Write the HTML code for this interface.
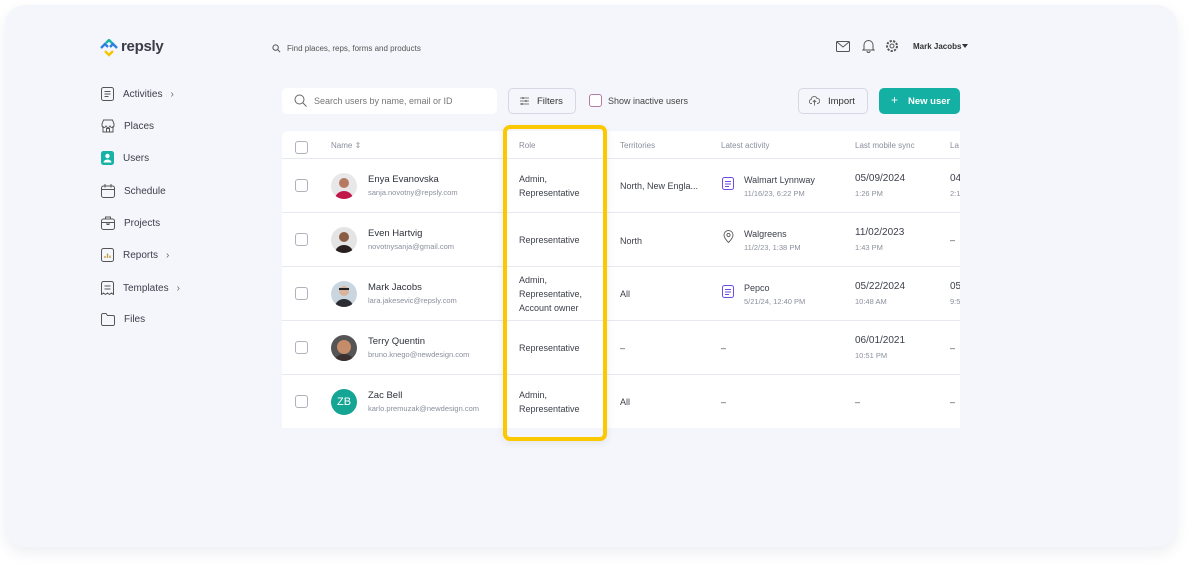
<!DOCTYPE html>
<html><head><meta charset="utf-8">
<style>
*{box-sizing:border-box;margin:0;padding:0}
body{width:1202px;height:572px;background:#fff;font-family:"Liberation Sans",sans-serif;color:#3c3f4a;position:relative;overflow:hidden}
.card{position:absolute;left:5px;top:5px;width:1172px;height:542px;background:#f4f6fb;border-radius:20px;box-shadow:0 6px 14px rgba(40,50,90,.08)}
.abs{position:absolute}
.nav{position:absolute;left:101px;font-size:10px;color:#3c3f4a;display:flex;align-items:center}
.nav svg{margin-right:9px}
.chev{margin-left:8px;color:#666;font-size:10px}
.table{position:absolute;left:282px;top:131px;width:678px;height:297px;background:#fff;border-radius:6px 0 0 0;overflow:hidden}
.th{position:absolute;top:10px;font-size:8px;color:#8a8f9c}
.row{position:absolute;left:0;width:678px;height:54px;border-top:1px solid #e6e9f2}
.cb{position:absolute;width:13px;height:13px;border:1px solid #aeb2bb;border-radius:3px;background:#fff}
.nm{position:absolute;left:86px;font-size:9.5px;color:#2f323b}
.em{position:absolute;left:86px;font-size:7.5px;color:#8a8f9c}
.t{position:absolute;font-size:9px;color:#3c3f4a;line-height:14px}
.s{position:absolute;font-size:7.5px;color:#8a8f9c}
.av{position:absolute;left:49px;width:26px;height:26px;border-radius:50%;overflow:hidden}
</style></head><body>
<div class="card"></div>

<svg class="abs" style="left:99px;top:39px" width="20" height="20" viewBox="0 0 20 20">
<path d="M2 9 L6 5 L9 8" stroke="#2d7fe0" stroke-width="2.4" fill="none"/>
<path d="M7 4 L10 1 L14 5" stroke="#17b3a6" stroke-width="2.4" fill="none"/>
<path d="M11 8 L14 5 L18 9" stroke="#2d7fe0" stroke-width="2.4" fill="none"/>
<path d="M6 12 L10 16 L14 12" stroke="#f5c400" stroke-width="2.4" fill="none"/>
</svg>
<div class="abs" style="left:121px;top:38px;font-size:15px;font-weight:bold;color:#3a3d46;letter-spacing:-.3px">repsly</div>

<svg class="abs" style="left:272px;top:44px" width="9" height="9" viewBox="0 0 10 10"><circle cx="4" cy="4" r="3" stroke="#555" fill="none" stroke-width="1.1"/><path d="M6.3 6.3L9 9" stroke="#555" stroke-width="1.1"/></svg>
<div class="abs" style="left:287px;top:44px;font-size:8px;color:#555">Find places, reps, forms and products</div>

<svg class="abs" style="left:836px;top:41px" width="14" height="11" viewBox="0 0 14 11"><rect x=".5" y=".5" width="13" height="10" rx="1" fill="none" stroke="#555"/><path d="M1 1l6 5 6-5" fill="none" stroke="#555"/></svg>
<svg class="abs" style="left:862px;top:39px" width="13" height="14" viewBox="0 0 13 14"><path d="M2 10V6a4.5 4.5 0 019 0v4l1 1H1z M5 12a1.5 1.5 0 003 0" fill="none" stroke="#555"/></svg>
<svg class="abs" style="left:885px;top:39px" width="14" height="14" viewBox="0 0 14 14"><circle cx="7" cy="7" r="2" fill="none" stroke="#555"/><circle cx="7" cy="7" r="5" fill="none" stroke="#555" stroke-dasharray="2.2 1.3" stroke-width="2"/></svg>
<div class="abs" style="left:913px;top:42px;font-size:8px;font-weight:bold;color:#333">Mark Jacobs</div>
<div class="abs" style="left:962px;top:44px;width:0;height:0;border-left:3.5px solid transparent;border-right:3.5px solid transparent;border-top:4px solid #333"></div>

<div class="nav" style="top:87px"><svg width="13" height="14" viewBox="0 0 13 14"><rect x=".5" y=".5" width="12" height="13" rx="2" fill="none" stroke="#555"/><path d="M3.5 4.5h6M3.5 7h6M3.5 9.5h4" stroke="#555"/></svg>Activities<span class="chev">&#8250;</span></div>
<div class="nav" style="top:119px"><svg width="14" height="14" viewBox="0 0 14 14"><path d="M1 5l1.5-4h9L13 5v1.5a2 2 0 01-4 0 2 2 0 01-4 0 2 2 0 01-4 0z M2 7v6h10V7 M5.5 13V9.5h3V13" fill="none" stroke="#555"/></svg>Places</div>
<div class="nav" style="top:151px"><svg width="13" height="14" viewBox="0 0 13 14"><rect x="0" y="0" width="13" height="14" rx="2.5" fill="#17b3a6"/><circle cx="6.5" cy="5" r="2.2" fill="#fff"/><path d="M2.5 11.5a4 3 0 018 0z" fill="#fff"/></svg>Users</div>
<div class="nav" style="top:184px"><svg width="14" height="14" viewBox="0 0 14 14"><rect x=".5" y="2" width="13" height="11.5" rx="2" fill="none" stroke="#555"/><path d="M.5 5.5h13M4 0v3.5M10 0v3.5" stroke="#555"/></svg>Schedule</div>
<div class="nav" style="top:216px"><svg width="14" height="14" viewBox="0 0 14 14"><rect x=".5" y="3" width="13" height="10.5" rx="2" fill="none" stroke="#555"/><path d="M4.5 3V1h5v2M.5 6.5h13M6 6.5v2h2v-2" fill="none" stroke="#555"/></svg>Projects</div>
<div class="nav" style="top:248px"><svg width="13" height="14" viewBox="0 0 13 14"><rect x=".5" y=".5" width="12" height="13" rx="2" fill="none" stroke="#555"/><path d="M4 10V8M6.5 10V5.5M9 10V7.5" stroke="#c8983c" stroke-width="1.3"/></svg>Reports<span class="chev">&#8250;</span></div>
<div class="nav" style="top:281px"><svg width="13" height="14" viewBox="0 0 13 14"><path d="M.5 2.5a2 2 0 012-2h8a2 2 0 012 2v11l-2-1.5-2 1.5-2-1.5-2 1.5-2-1.5-2 1.5z M3.5 5h6M3.5 8h6" fill="none" stroke="#555"/></svg>Templates<span class="chev">&#8250;</span></div>
<div class="nav" style="top:313px"><svg width="14" height="13" viewBox="0 0 14 13"><path d="M.5 2a1.5 1.5 0 011.5-1.5h3l1.5 2h5.5a1.5 1.5 0 011.5 1.5v7a1.5 1.5 0 01-1.5 1.5H2A1.5 1.5 0 01.5 11z" fill="none" stroke="#555"/></svg>Files</div>

<div class="abs" style="left:282px;top:88px;width:215px;height:26px;background:#fff;border-radius:5px"></div>
<svg class="abs" style="left:294px;top:94px" width="13" height="13" viewBox="0 0 13 13"><circle cx="5.5" cy="5.5" r="4.5" fill="none" stroke="#666"/><path d="M9 9l3.5 3.5" stroke="#666"/></svg>
<div class="abs" style="left:314px;top:96px;font-size:9px;color:#777">Search users by name, email or ID</div>
<div class="abs" style="left:508px;top:88px;width:68px;height:26px;border:1px solid #d5d8e2;border-radius:5px;background:#f4f6fb"></div>
<svg class="abs" style="left:520px;top:97px" width="9" height="8" viewBox="0 0 9 8"><path d="M0 1h9M0 4h9M0 7h9" stroke="#555" stroke-width=".8"/><path d="M3 0v2M6 3v2M2 6v2" stroke="#555"/></svg>
<div class="abs" style="left:537px;top:96px;font-size:9.5px;color:#333">Filters</div>
<div class="abs" style="left:589px;top:94px;width:13px;height:13px;border:1px solid #b37aa5;border-radius:3px;background:#fff"></div>
<div class="abs" style="left:608px;top:96px;font-size:9px;color:#444">Show inactive users</div>
<div class="abs" style="left:798px;top:88px;width:70px;height:26px;border:1px solid #d5d8e2;border-radius:5px;background:#f4f6fb"></div>
<svg class="abs" style="left:809px;top:96px" width="11" height="10" viewBox="0 0 11 10"><path d="M3 7.5H2.5a2 2 0 01-.3-4A3 3 0 018 2.5a2.3 2.3 0 01.5 5H8M5.5 9.5V4.5M3.8 6l1.7-1.7L7.2 6" fill="none" stroke="#666" stroke-width=".9"/></svg>
<div class="abs" style="left:828px;top:96px;font-size:9.5px;color:#333">Import</div>
<div class="abs" style="left:879px;top:88px;width:81px;height:26px;background:#14b0a3;border-radius:5px"></div>
<div class="abs" style="left:891px;top:93px;font-size:12px;color:#fff">+</div>
<div class="abs" style="left:908px;top:96px;font-size:9.5px;color:#fff;font-weight:bold">New user</div>

<div class="table">
  <div class="cb" style="left:13px;top:10px"></div>
  <div class="th" style="left:49px">Name <span style="color:#999;font-size:8px">&#8661;</span></div>
  <div class="th" style="left:237px">Role</div>
  <div class="th" style="left:338px">Territories</div>
  <div class="th" style="left:439px">Latest activity</div>
  <div class="th" style="left:573px">Last mobile sync</div>
  <div class="th" style="left:668px">La</div>

  <div class="row" style="top:27px">
    <div class="cb" style="left:13px;top:20px"></div>
    <div class="av" style="top:14px;background:#e8e8ea"><svg width="26" height="26"><circle cx="13" cy="10" r="5" fill="#b57a62"/><path d="M4 26a9 8 0 0118 0z" fill="#c0184a"/></svg></div>
    <div class="nm" style="top:15px">Enya Evanovska</div><div class="em" style="top:29px">sanja.novotny@repsly.com</div>
    <div class="t" style="left:237px;top:13px">Admin,<br>Representative</div>
    <div class="t" style="left:338px;top:20px">North, New Engla...</div>
    <svg class="abs" style="left:440px;top:17px" width="12" height="14" viewBox="0 0 12 14"><rect x=".5" y="1.5" width="11" height="12" rx="2" fill="none" stroke="#6b4de6"/><path d="M3 5.5h6M3 8h6M3 10.5h4" stroke="#6b4de6"/></svg>
    <div class="t" style="left:462px;top:14px">Walmart Lynnway</div><div class="s" style="left:462px;top:30px">11/16/23, 6:22 PM</div>
    <div class="t" style="left:573px;top:13px;font-size:10px">05/09/2024</div><div class="s" style="left:573px;top:30px">1:26 PM</div>
    <div class="t" style="left:668px;top:13px;font-size:10px">04</div><div class="s" style="left:668px;top:30px">2:1</div>
  </div>
  <div class="row" style="top:81px">
    <div class="cb" style="left:13px;top:20px"></div>
    <div class="av" style="top:14px;background:#e4e4e4"><svg width="26" height="26"><circle cx="13" cy="10" r="5" fill="#8a5d45"/><path d="M4 26a9 8 0 0118 0z" fill="#2a1f1f"/></svg></div>
    <div class="nm" style="top:15px">Even Hartvig</div><div class="em" style="top:29px">novotnysanja@gmail.com</div>
    <div class="t" style="left:237px;top:20px">Representative</div>
    <div class="t" style="left:338px;top:21px">North</div>
    <svg class="abs" style="left:441px;top:17px" width="11" height="13" viewBox="0 0 11 13"><path d="M5.5 12.5S1 8 1 5a4.5 4.5 0 019 0c0 3-4.5 7.5-4.5 7.5z" fill="none" stroke="#666"/><circle cx="5.5" cy="5" r="1.6" fill="none" stroke="#666"/></svg>
    <div class="t" style="left:462px;top:14px">Walgreens</div><div class="s" style="left:462px;top:30px">11/2/23, 1:38 PM</div>
    <div class="t" style="left:573px;top:13px;font-size:10px">11/02/2023</div><div class="s" style="left:573px;top:30px">1:43 PM</div>
    <div class="t" style="left:668px;top:20px">–</div>
  </div>
  <div class="row" style="top:135px">
    <div class="cb" style="left:13px;top:20px"></div>
    <div class="av" style="top:14px;background:#c9d6e0"><svg width="26" height="26"><circle cx="13" cy="10" r="5" fill="#d8b49a"/><path d="M8 8h10" stroke="#222" stroke-width="2"/><path d="M4 26a9 8 0 0118 0z" fill="#2c2c33"/></svg></div>
    <div class="nm" style="top:15px">Mark Jacobs</div><div class="em" style="top:29px">lara.jakesevic@repsly.com</div>
    <div class="t" style="left:237px;top:6px">Admin,<br>Representative,<br>Account owner</div>
    <div class="t" style="left:338px;top:20px">All</div>
    <svg class="abs" style="left:440px;top:17px" width="12" height="14" viewBox="0 0 12 14"><rect x=".5" y="1.5" width="11" height="12" rx="2" fill="none" stroke="#6b4de6"/><path d="M3 5.5h6M3 8h6M3 10.5h4" stroke="#6b4de6"/></svg>
    <div class="t" style="left:462px;top:14px">Pepco</div><div class="s" style="left:462px;top:30px">5/21/24, 12:40 PM</div>
    <div class="t" style="left:573px;top:13px;font-size:10px">05/22/2024</div><div class="s" style="left:573px;top:30px">10:48 AM</div>
    <div class="t" style="left:668px;top:13px;font-size:10px">05</div><div class="s" style="left:668px;top:30px">9:5</div>
  </div>
  <div class="row" style="top:189px">
    <div class="cb" style="left:13px;top:20px"></div>
    <div class="av" style="top:14px;background:#555"><svg width="26" height="26"><circle cx="13" cy="12" r="7" fill="#c58c6a"/><path d="M4 26a9 7 0 0118 0z" fill="#3a3030"/></svg></div>
    <div class="nm" style="top:15px">Terry Quentin</div><div class="em" style="top:29px">bruno.knego@newdesign.com</div>
    <div class="t" style="left:237px;top:20px">Representative</div>
    <div class="t" style="left:338px;top:20px">–</div>
    <div class="t" style="left:439px;top:20px">–</div>
    <div class="t" style="left:573px;top:13px;font-size:10px">06/01/2021</div><div class="s" style="left:573px;top:30px">10:51 PM</div>
    <div class="t" style="left:668px;top:20px">–</div>
  </div>
  <div class="row" style="top:243px">
    <div class="cb" style="left:13px;top:20px"></div>
    <div class="av" style="top:14px;background:#14a594;color:#fff;font-size:11px;text-align:center;line-height:26px">ZB</div>
    <div class="nm" style="top:15px">Zac Bell</div><div class="em" style="top:29px">karlo.premuzak@newdesign.com</div>
    <div class="t" style="left:237px;top:13px">Admin,<br>Representative</div>
    <div class="t" style="left:338px;top:20px">All</div>
    <div class="t" style="left:439px;top:20px">–</div>
    <div class="t" style="left:573px;top:20px">–</div>
    <div class="t" style="left:668px;top:20px">–</div>
  </div>
</div>

<div class="abs" style="left:503px;top:125px;width:104px;height:316px;border:4px solid #fcc800;border-radius:7px;box-shadow:0 2px 8px rgba(0,0,0,.08)"></div>
</body></html>
